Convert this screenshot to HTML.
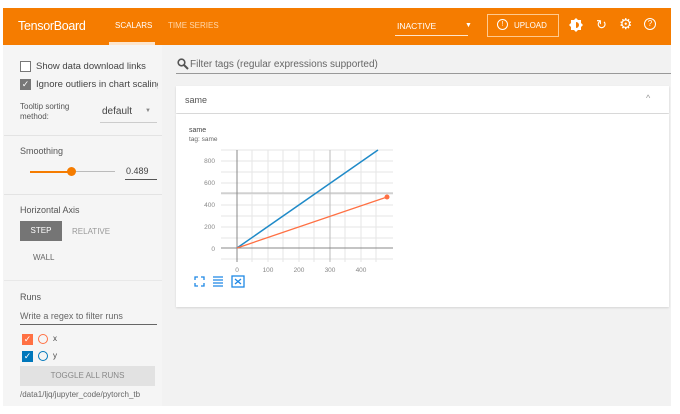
<!DOCTYPE html>
<html><head><style>
body{margin:0;width:680px;height:414px;background:#fff;font-family:"Liberation Sans",sans-serif;position:relative;overflow:hidden}
.abs{position:absolute}
.hdr{left:3px;top:8px;width:668px;height:37px;background:#f57c00;color:#fff}
.t{font-size:10px;color:#444}
</style></head><body>
<div class="abs hdr">
 <div class="abs" style="left:15px;top:11px;font-size:12.5px;letter-spacing:-0.3px">TensorBoard</div>
 <div class="abs" style="left:112px;top:13px;font-size:8px">SCALARS</div>
 <div class="abs" style="left:106px;top:34px;width:46px;height:3px;background:#fff;opacity:.8"></div>
 <div class="abs" style="left:165px;top:13px;font-size:8px;color:#ffd7aa">TIME SERIES</div>
 <div class="abs" style="left:394px;top:13px;font-size:8.5px">INACTIVE</div>
 <div class="abs" style="left:462px;top:14px;font-size:7px">▼</div>
 <div class="abs" style="left:392px;top:27px;width:73px;height:1px;background:#fff;opacity:.8"></div>
 <div class="abs" style="left:484px;top:6px;width:70px;height:21px;border:1px solid #ffc98e;font-size:8px;line-height:21px;text-indent:26px">UPLOAD</div>
 <div class="abs" style="left:494px;top:11px;width:9px;height:9px;border:1.3px solid #fff;border-radius:50%;font-size:7px;text-align:center;line-height:9px">!</div>
 <svg class="abs" style="left:566px;top:10px" width="14" height="14"><path d="M7 0l2 2h3v3l2 2-2 2v3H9l-2 2-2-2H2V9L0 7l2-2V2h3z" fill="#fff"/><path d="M7 4a3 3 0 0 1 0 6z" fill="#f57c00"/></svg>
 <div class="abs" style="left:593px;top:9px;font-size:13px">↻</div>
 <div class="abs" style="left:616px;top:7px;font-size:15px">⚙</div>
 <div class="abs" style="left:641px;top:10px;width:10px;height:10px;border:1.3px solid #fff;border-radius:50%;font-size:8px;text-align:center;line-height:10px">?</div>
</div>
<div class="abs" style="left:3px;top:45px;width:159px;height:361px;background:#f5f5f5"></div>
<div class="abs" style="left:162px;top:45px;width:509px;height:361px;background:#f2f2f2"></div>
<div class="abs" style="left:20px;top:61px;width:9px;height:9px;border:1px solid #777;background:#fff"></div>
<div class="abs t" style="left:36px;top:61px;font-size:9.5px">Show data download links</div>
<div class="abs" style="left:20px;top:79px;width:11px;height:11px;background:#777;color:#fff;font-size:9px;line-height:11px;text-align:center">✓</div>
<div class="abs t" style="left:36px;top:79px;font-size:9.5px;white-space:nowrap;width:122px;overflow:hidden">Ignore outliers in chart scaling</div>
<div class="abs t" style="left:20px;top:102px;font-size:8px;line-height:10px;color:#555">Tooltip sorting<br>method:</div>
<div class="abs t" style="left:102px;top:106px;font-size:10px">default</div>
<div class="abs" style="left:145px;top:108px;font-size:6px;color:#888">▼</div>
<div class="abs" style="left:100px;top:122px;width:57px;height:1px;background:#ccc"></div>
<div class="abs" style="left:4px;top:135px;width:158px;height:1px;background:#e3e3e3"></div>
<div class="abs t" style="left:20px;top:146px;font-size:9px;color:#555">Smoothing</div>
<div class="abs" style="left:30px;top:171px;width:42px;height:2px;background:#f57c00"></div>
<div class="abs" style="left:72px;top:171px;width:43px;height:1px;background:#bbb"></div>
<div class="abs" style="left:67px;top:167px;width:9px;height:9px;border-radius:50%;background:#f57c00"></div>
<div class="abs t" style="left:126px;top:166px;font-size:9px">0.489</div>
<div class="abs" style="left:125px;top:179px;width:32px;height:1px;background:#555"></div>
<div class="abs" style="left:4px;top:194px;width:158px;height:1px;background:#e3e3e3"></div>
<div class="abs t" style="left:20px;top:205px;font-size:9px;color:#555">Horizontal Axis</div>
<div class="abs" style="left:20px;top:221px;width:42px;height:20px;background:#757575;color:#fff;font-size:8px;line-height:20px;text-align:center">STEP</div>
<div class="abs" style="left:72px;top:227px;font-size:8px;color:#999">RELATIVE</div>
<div class="abs" style="left:33px;top:253px;font-size:8px;color:#666">WALL</div>
<div class="abs" style="left:4px;top:280px;width:158px;height:1px;background:#e8e8e8"></div>
<div class="abs t" style="left:20px;top:292px;font-size:9px;color:#555">Runs</div>
<div class="abs t" style="left:20px;top:311px;font-size:9px;color:#666">Write a regex to filter runs</div>
<div class="abs" style="left:20px;top:324px;width:137px;height:1px;background:#666"></div>
<div class="abs" style="left:22px;top:334px;width:11px;height:11px;background:#ff7043;color:#fff;font-size:9px;line-height:11px;text-align:center">✓</div>
<div class="abs" style="left:38px;top:334px;width:8px;height:8px;border:1.3px solid #ff7043;border-radius:50%"></div>
<div class="abs t" style="left:53px;top:334px;font-size:8px">x</div>
<div class="abs" style="left:22px;top:351px;width:11px;height:11px;background:#0077bb;color:#fff;font-size:9px;line-height:11px;text-align:center">✓</div>
<div class="abs" style="left:38px;top:351px;width:8px;height:8px;border:1.3px solid #0077bb;border-radius:50%"></div>
<div class="abs t" style="left:53px;top:351px;font-size:8px">y</div>
<div class="abs" style="left:20px;top:366px;width:135px;height:20px;background:#e2e2e2;color:#888;font-size:8px;line-height:20px;text-align:center">TOGGLE ALL RUNS</div>
<div class="abs t" style="left:20px;top:390px;font-size:8px;color:#666">/data1/ljq/jupyter_code/pytorch_tb</div>

<svg class="abs" style="left:177px;top:58px" width="12" height="12"><circle cx="4.5" cy="4.5" r="3.3" stroke="#555" stroke-width="1.6" fill="none"/><path d="M7 7l4 4" stroke="#555" stroke-width="2"/></svg>
<div class="abs" style="left:190px;top:59px;font-size:10px;color:#666">Filter tags (regular expressions supported)</div>
<div class="abs" style="left:176px;top:73px;width:495px;height:1px;background:#999"></div>
<div class="abs" style="left:176px;top:86px;width:493px;height:27px;background:#fff;box-shadow:0 1px 2px rgba(0,0,0,.15)"></div>
<div class="abs t" style="left:185px;top:95px;font-size:9px;color:#555">same</div>
<div class="abs" style="left:646px;top:93px;font-size:9px;color:#999">^</div>
<div class="abs" style="left:176px;top:114px;width:493px;height:193px;background:#fff;box-shadow:0 1px 2px rgba(0,0,0,.12)"></div>
<div class="abs" style="left:189px;top:127px;font-size:7px;color:#444">same</div>
<div class="abs" style="left:189px;top:136px;font-size:6.5px;color:#666">tag: same</div>
<svg class="abs" style="left:176px;top:114px" width="493" height="193">
<g stroke="#e6e6e6" stroke-width="1">
<path d="M45 36H217M45 47H217M45 58H217M45 69H217M45 80H217M45 91H217M45 102H217M45 113H217M45 124H217M45 145H217"/>
<path d="M76 36V148M92 36V148M107 36V148M123 36V148M138 36V148M154 36V148M169 36V148M185 36V148M200 36V148"/>
</g>
<g stroke="#bbb"><path d="M45 79H217M154 36V148"/></g>
<g stroke="#888"><path d="M45 134H217M61 36V148"/></g>
<g font-size="6.5" fill="#888" font-family="Liberation Sans" text-anchor="end">
<text x="39" y="49">800</text><text x="39" y="71">600</text><text x="39" y="93">400</text><text x="39" y="115">200</text><text x="39" y="137">0</text></g>
<g font-size="6.5" fill="#888" font-family="Liberation Sans" text-anchor="middle">
<text x="61" y="158">0</text><text x="92" y="158">100</text><text x="123" y="158">200</text><text x="154" y="158">300</text><text x="185" y="158">400</text></g>
<path d="M61 134L202 36" stroke="#1f8ac8" stroke-width="1.5"/>
<path d="M61 134L211 83" stroke="#ff7043" stroke-width="1.3"/>
<circle cx="211" cy="83" r="2.5" fill="#ff7043"/>
<g stroke="#1e88e5" stroke-width="1.3" fill="none">
<path d="M19 166v-3h3M25 163h3v3M28 169v3h-3M22 172h-3v-3"/>
<path d="M37 163h10M37 166h10M37 169h10M37 172h10"/>
<rect x="56" y="162" width="12" height="11"/><path d="M59 165l6 5M65 165l-6 5"/>
</g>
</svg>
</body></html>
